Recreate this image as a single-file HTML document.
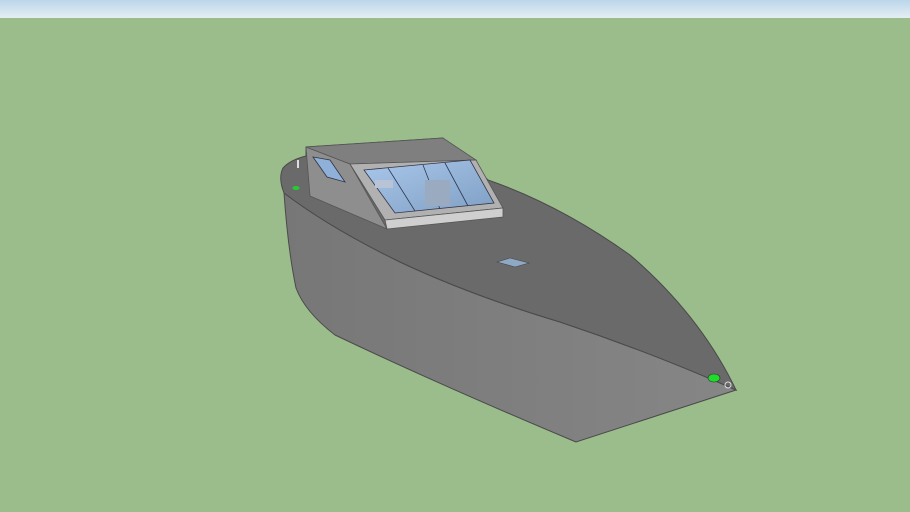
<!DOCTYPE html>
<html><head><style>html,body{margin:0;padding:0;width:910px;height:512px;overflow:hidden;background:#9bbd8c}</style></head>
<body>
<svg width="910" height="512" viewBox="0 0 910 512" xmlns="http://www.w3.org/2000/svg">
<defs>
<linearGradient id="sky" x1="0" y1="0" x2="0" y2="1"><stop offset="0" stop-color="#bcd6ea"/><stop offset="1" stop-color="#e4eef4"/></linearGradient>
<linearGradient id="win" x1="0" y1="0" x2="1" y2="1"><stop offset="0" stop-color="#a9c7ea"/><stop offset="1" stop-color="#7f9fc4"/></linearGradient>
<linearGradient id="side" x1="0" y1="0" x2="1" y2="0"><stop offset="0" stop-color="#777"/><stop offset="1" stop-color="#868686"/></linearGradient>
</defs>
<rect x="0" y="0" width="910" height="18" fill="url(#sky)"/>
<rect x="0" y="18" width="910" height="494" fill="#9bbd8c"/>
<!-- hull side -->
<path d="M284,193 Q330,228 400,262 Q470,295 560,322 Q650,352 736,390 L576,442 Q440,385 335,335 Q305,312 296,288 Q288,250 284,193 Z" fill="url(#side)" stroke="#4a4a4a" stroke-width="1"/>
<!-- deck -->
<path d="M284,193 Q278,178 283,168 Q290,160 306,156 L306,147 L443,138 L488,180 Q560,205 630,255 Q700,315 736,390 Q650,352 560,322 Q470,295 400,262 Q330,228 284,193 Z" fill="#6a6a6a" stroke="#4a4a4a" stroke-width="1"/>
<!-- cabin left side -->
<path d="M306,147 L350,164 L387,229 L310,196 Z" fill="#8e8e8e" stroke="#555" stroke-width="0.8"/>
<!-- roof -->
<path d="M306,147 L443,138 L476,160 L350,164 Z" fill="#7f7f7f" stroke="#555" stroke-width="0.8"/>
<!-- front frame -->
<path d="M350,164 L476,160 L503,208 L385,220 Z" fill="#b1b1b1" stroke="#555" stroke-width="0.8"/>
<path d="M385,220 L503,208 L503,217 L387,229 Z" fill="#cfcfcf" stroke="#555" stroke-width="0.8"/>
<!-- windshield -->
<path d="M364,170 L470,160 L494,203 L395,213 Z" fill="url(#win)" stroke="#334" stroke-width="0.8"/>
<path d="M388,168 L415,211 M423,165 L440,209 M445,163 L468,206" stroke="#2c3a55" stroke-width="0.8"/>
<rect x="425" y="180" width="25" height="26" fill="#9aaac0"/>
<rect x="375" y="180" width="18" height="8" fill="#b8c4d6"/>
<!-- side window -->
<path d="M313,157 L330,160 L345,182 L327,177 Z" fill="#8fb0d8" stroke="#334" stroke-width="0.8"/>
<!-- hatch -->
<path d="M497,262 L510,258 L529,263 L515,267 Z" fill="#8fa8c4" stroke="#444" stroke-width="0.6"/>
<!-- lights -->
<ellipse cx="296" cy="188" rx="3.5" ry="2" fill="#22cc33"/>
<rect x="297" y="160" width="2" height="8" fill="#ddd"/>
<ellipse cx="714" cy="378" rx="6" ry="4" fill="#1fdc2b" stroke="#333" stroke-width="0.6"/>
<circle cx="728" cy="385" r="3" fill="none" stroke="#ddd" stroke-width="1"/>
</svg>
</body></html>
